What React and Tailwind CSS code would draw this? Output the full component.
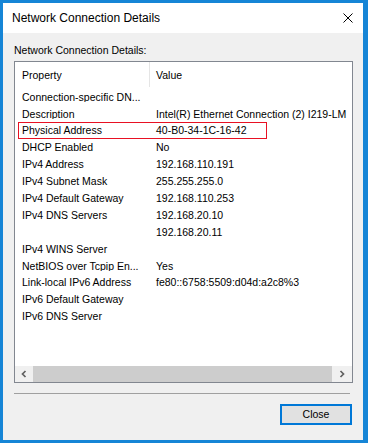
import React from "react";

const rows = [
  ["Connection-specific DN...", ""],
  ["Description", "Intel(R) Ethernet Connection (2) I219-LM"],
  ["Physical Address", "40-B0-34-1C-16-42", true],
  ["DHCP Enabled", "No"],
  ["IPv4 Address", "192.168.110.191"],
  ["IPv4 Subnet Mask", "255.255.255.0"],
  ["IPv4 Default Gateway", "192.168.110.253"],
  ["IPv4 DNS Servers", "192.168.20.10"],
  ["", "192.168.20.11"],
  ["IPv4 WINS Server", ""],
  ["NetBIOS over Tcpip En...", "Yes"],
  ["Link-local IPv6 Address", "fe80::6758:5509:d04d:a2c8%3"],
  ["IPv6 Default Gateway", ""],
  ["IPv6 DNS Server", ""],
];

export default function App() {
  return (
    <div
      className="w-[368px] h-[443px] bg-[#1685d6] pt-[3px] pl-[3px] pr-[5px] pb-[3px] overflow-hidden"
      style={{ fontFamily: '"Liberation Sans", Arial, sans-serif' }}
    >
      <div className="w-[360px] h-[437px] bg-[#f0f0f0] flex flex-col text-black">
        {/* Title bar */}
        <div className="h-[30px] bg-white flex items-center justify-between pl-[9px] pr-[10px] shrink-0">
          <span className="text-[12px] leading-none">Network Connection Details</span>
          <svg width="10" height="10" viewBox="0 0 10 10" className="block">
            <line x1="0.5" y1="0.5" x2="9.5" y2="9.5" stroke="#000" strokeWidth="1" />
            <line x1="9.5" y1="0.5" x2="0.5" y2="9.5" stroke="#000" strokeWidth="1" />
          </svg>
        </div>

        {/* Label */}
        <div className="pl-[11px] h-[28px] flex items-center pt-[6px] text-[10.5px] leading-none shrink-0">
          Network Connection Details:
        </div>

        {/* List */}
        <div className="ml-[11px] w-[339px] h-[322px] border border-[#828790] bg-white flex flex-col shrink-0 text-[10.5px] leading-none">
          {/* Header */}
          <div className="h-[26.5px] flex items-center shrink-0">
            <div className="w-[134px] pl-[7px] h-full flex items-center">Property</div>
            <div className="w-px h-[25px] self-start bg-[#e5e5e5]" />
            <div className="pl-[6px] flex items-center h-full">Value</div>
          </div>
          {/* Rows */}
          <div className="flex-1 flex flex-col">
            {rows.map(([p, v, sel], i) => (
              <div key={i} className="relative h-[16.9px] flex items-center shrink-0">
                <div className="w-[134px] pl-[7px] whitespace-nowrap overflow-hidden">{p}</div>
                <div className="pl-[7px] whitespace-nowrap">{v}</div>
                {sel && (
                  <div className="absolute left-[3px] top-0 w-[249px] h-full border border-[#e81123]" />
                )}
              </div>
            ))}
          </div>
          {/* Horizontal scrollbar */}
          <div className="h-[16px] bg-[#f0f0f0] flex items-stretch shrink-0">
            <div className="w-[18px] flex items-center justify-center">
              <svg width="8" height="8" viewBox="0 0 8 8">
                <polyline points="5.5,1 2.5,4 5.5,7" fill="none" stroke="#606060" strokeWidth="1.7" />
              </svg>
            </div>
            <div className="w-[299px] bg-[#cdcdcd]" />
            <div className="flex-1 flex items-center justify-center">
              <svg width="8" height="8" viewBox="0 0 8 8">
                <polyline points="2.5,1 5.5,4 2.5,7" fill="none" stroke="#606060" strokeWidth="1.7" />
              </svg>
            </div>
          </div>
        </div>

        {/* Separator */}
        <div className="ml-[11px] mt-[10px] w-[336px] h-px bg-[#a0a0a0] shrink-0" />

        {/* Button row */}
        <div className="flex justify-end pr-[11px] mt-[10px] shrink-0">
          <button className="w-[72px] h-[21px] border-2 border-[#0078d7] bg-[#e1e1e1] text-[10.5px] leading-none flex items-center justify-center">
            Close
          </button>
        </div>
      </div>
    </div>
  );
}
